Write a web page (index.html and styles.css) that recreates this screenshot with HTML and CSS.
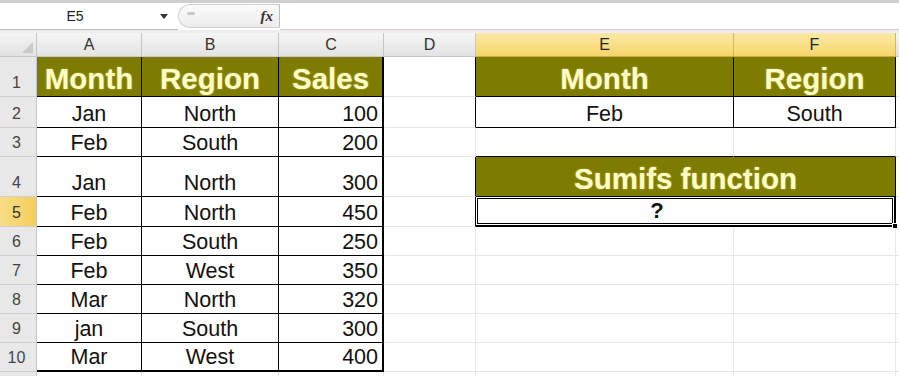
FILE: index.html
```html
<!DOCTYPE html>
<html lang="en">
<head>
    <meta charset="UTF-8">
    <meta name="viewport" content="width=device-width, initial-scale=1.0">
    <title>Sumifs function</title>
    <link rel="stylesheet" href="styles.css">
</head>
<body>
    <div class="formula-bar">
        <div class="name-box">
            <span class="name">E5</span>
            <span class="arrow"></span>
        </div>
        <div class="fx-box">
            <span class="grip"></span>
            <span class="fx">fx</span>
        </div>
        <div class="formula-input"></div>
    </div>

    <div class="sheet">
        <!-- column headers -->
        <div class="corner"><span class="tri"></span></div>
        <div class="ch">A</div>
        <div class="ch">B</div>
        <div class="ch">C</div>
        <div class="ch">D</div>
        <div class="ch sel">E</div>
        <div class="ch sel">F</div>
        <div class="ch last"></div>

        <!-- row 1 -->
        <div class="rh">1</div>
        <div class="c hd bk">Month</div>
        <div class="c hd bk">Region</div>
        <div class="c hd bk thr">Sales</div>
        <div class="c br"></div>
        <div class="c hd bk">Month</div>
        <div class="c hd bk">Region</div>
        <div class="c"></div>

        <!-- row 2 -->
        <div class="rh">2</div>
        <div class="c bk">Jan</div>
        <div class="c bk">North</div>
        <div class="c bk thr num">100</div>
        <div class="c br"></div>
        <div class="c bk">Feb</div>
        <div class="c bk">South</div>
        <div class="c"></div>

        <!-- row 3 -->
        <div class="rh">3</div>
        <div class="c bk">Feb</div>
        <div class="c bk">South</div>
        <div class="c bk thr num">200</div>
        <div class="c"></div>
        <div class="c bb"></div>
        <div class="c bb"></div>
        <div class="c"></div>

        <!-- row 4 -->
        <div class="rh">4</div>
        <div class="c bk">Jan</div>
        <div class="c bk">North</div>
        <div class="c bk thr num">300</div>
        <div class="c br"></div>
        <div class="c hd bk span2">Sumifs function</div>
        <div class="c"></div>

        <!-- row 5 -->
        <div class="rh sel">5</div>
        <div class="c bk">Feb</div>
        <div class="c bk">North</div>
        <div class="c bk thr num">450</div>
        <div class="c br"></div>
        <div class="c bk span2 active"><span class="q">?</span><span class="handle"></span></div>
        <div class="c"></div>

        <!-- row 6 -->
        <div class="rh">6</div>
        <div class="c bk">Feb</div>
        <div class="c bk">South</div>
        <div class="c bk thr num">250</div>
        <div class="c"></div>
        <div class="c"></div>
        <div class="c"></div>
        <div class="c"></div>

        <!-- row 7 -->
        <div class="rh">7</div>
        <div class="c bk">Feb</div>
        <div class="c bk">West</div>
        <div class="c bk thr num">350</div>
        <div class="c"></div>
        <div class="c"></div>
        <div class="c"></div>
        <div class="c"></div>

        <!-- row 8 -->
        <div class="rh">8</div>
        <div class="c bk">Mar</div>
        <div class="c bk">North</div>
        <div class="c bk thr num">320</div>
        <div class="c"></div>
        <div class="c"></div>
        <div class="c"></div>
        <div class="c"></div>

        <!-- row 9 -->
        <div class="rh">9</div>
        <div class="c bk">jan</div>
        <div class="c bk">South</div>
        <div class="c bk thr num">300</div>
        <div class="c"></div>
        <div class="c"></div>
        <div class="c"></div>
        <div class="c"></div>

        <!-- row 10 -->
        <div class="rh">10</div>
        <div class="c bk thb">Mar</div>
        <div class="c bk thb">West</div>
        <div class="c bk thr thb num">400</div>
        <div class="c"></div>
        <div class="c"></div>
        <div class="c"></div>
        <div class="c"></div>

        <!-- row 11 (cut off) -->
        <div class="rh"></div>
        <div class="c"></div>
        <div class="c"></div>
        <div class="c"></div>
        <div class="c"></div>
        <div class="c"></div>
        <div class="c"></div>
        <div class="c"></div>
    </div>
</body>
</html>
```

FILE: styles.css
```css
* {
    box-sizing: border-box;
}
body {
    margin: 0;
    width: 899px;
    height: 376px;
    overflow: hidden;
    background-color: #fff;
    font-family: "Liberation Sans", Arial, sans-serif;
}

/* formula bar */
.formula-bar {
    display: flex;
    height: 33px;
    border-top: 3px solid #cfcfcf;
    border-bottom: 3px solid #eeeeee;
    background-color: #fff;
}
.name-box {
    width: 178px;
    display: flex;
    align-items: center;
    border-bottom: 1px solid #bcbcbc;
}
.name {
    width: 150px;
    text-align: center;
    font-size: 14px;
    color: #222;
}
.arrow {
    margin-left: 10px;
    width: 0;
    height: 0;
    border-left: 4px solid transparent;
    border-right: 4px solid transparent;
    border-top: 5px solid #333;
}
.fx-box {
    width: 102px;
    display: flex;
    align-items: center;
    justify-content: space-between;
    padding: 0 6px 0 8px;
    margin: 1px 0 2px;
    border: 1px solid #d0d0d0;
    border-right-color: #bdbdbd;
    border-radius: 12px 0 0 12px;
    background: linear-gradient(#fbfbfb, #ececec);
}
.grip {
    width: 8px;
    height: 3px;
    background-color: #c8c8c8;
    border-radius: 2px;
    margin-top: -6px;
}
.fx {
    font-family: "Liberation Serif", "Times New Roman", serif;
    font-style: italic;
    font-weight: bold;
    font-size: 15px;
    color: #333;
}
.formula-input {
    flex: 1;
    border-bottom: 1px solid #e3c6d6;
}

/* sheet grid */
.sheet {
    display: grid;
    grid-template-columns: 37px 105px 137px 105px 92px 258px 162px 1fr;
    grid-template-rows: 24px 40px 31px 29px 40px 30px 29px 29px 29px 29px 29px 1fr;
    height: 343px;
}
.corner {
    position: relative;
    background: linear-gradient(#f4f4f4, #e2e2e2);
    border-right: 1px solid #c6c6c6;
    border-bottom: 1px solid #c6c6c6;
}
.tri {
    position: absolute;
    right: 3px;
    bottom: 3px;
    width: 0;
    height: 0;
    border-left: 11px solid transparent;
    border-bottom: 11px solid #c9c9c9;
}
.ch {
    display: flex;
    justify-content: center;
    align-items: flex-end;
    padding-bottom: 2px;
    font-size: 16px;
    color: #333;
    background: linear-gradient(#f6f6f6, #e3e3e3);
    border-right: 1px solid #c6c6c6;
    border-bottom: 1px solid #c6c6c6;
}
.ch.sel {
    background: linear-gradient(#fce9a6, #f6d56a);
    border-right-color: #d8b75a;
    border-bottom-color: #c9a74a;
    color: #222;
}
.ch.last {
    border-right: none;
}
.rh {
    display: flex;
    justify-content: center;
    align-items: flex-end;
    padding-bottom: 4px;
    padding-right: 3px;
    font-size: 16px;
    color: #444;
    background-color: #e8e8e8;
    border-right: 1px solid #c6c6c6;
    border-bottom: 1px solid #cfcfcf;
}
.rh.sel {
    background: linear-gradient(90deg, #f8dd85, #f4cf5c);
    color: #333;
}

/* cells */
.c {
    display: flex;
    justify-content: center;
    align-items: flex-end;
    padding: 0 4px 0;
    font-size: 21.5px;
    color: #111;
    border-right: 1px solid #e8e8e8;
    border-bottom: 1px solid #e8e8e8;
}
.c.bk {
    border-right-color: #000;
    border-bottom-color: #000;
}
.c.br {
    border-right-color: #000;
}
.c.bb {
    border-bottom-color: #000;
}
.c.thr {
    border-right-width: 2px;
}
.c.thb {
    border-bottom-width: 2px;
}
.c.num {
    justify-content: flex-end;
}
.c.hd {
    background-color: #7e7c00;
    color: #fdfdc4;
    font-weight: bold;
    font-size: 29.5px;
    padding-bottom: 0;
    text-shadow: 0 0 2px rgba(255, 255, 200, 0.5);
}
.span2 {
    grid-column: span 2;
}
.active {
    position: relative;
    border-right-width: 2px;
    border-bottom-width: 2px;
    box-shadow: inset 0 0 0 1px #fff, inset 0 0 0 2px #000;
    padding-right: 60px;
}
.q {
    font-weight: bold;
    font-size: 22px;
    padding-bottom: 1px;
}
.handle {
    position: absolute;
    right: -4px;
    bottom: -4px;
    width: 6px;
    height: 6px;
    background-color: #000;
    border: 1px solid #fff;
}
```
